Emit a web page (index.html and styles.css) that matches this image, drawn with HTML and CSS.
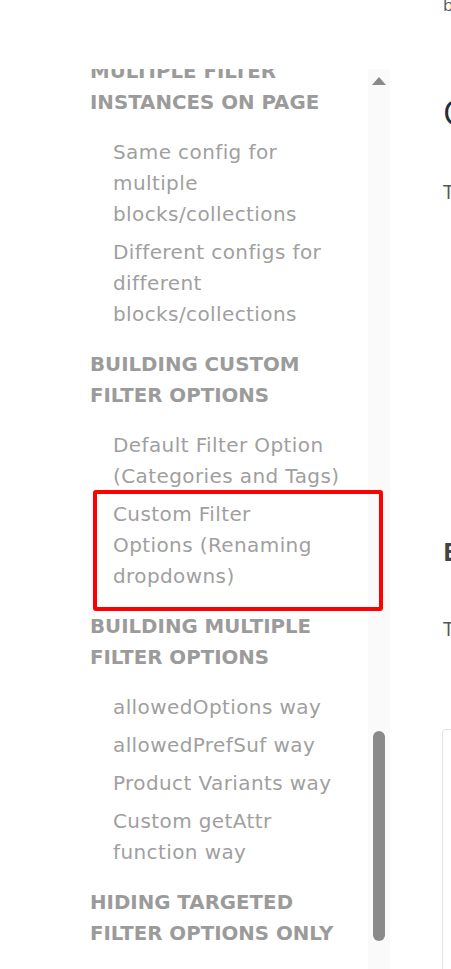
FILE: index.html
```html
<!DOCTYPE html>
<html lang="en">
<head>
  <meta charset="UTF-8" />
  <meta name="viewport" content="width=device-width, initial-scale=1.0"/>
  <title>Filter Docs</title>
  <link rel="stylesheet" href="styles.css">
</head>
<body>
  <div class="page">
    <aside class="sidebar">
      <nav class="toc">
        <div class="toc-section">
          <div class="toc-title">Multiple Filter<br>Instances on Page</div>
          <ul class="toc-sub">
            <li>Same config for<br>multiple<br>blocks/collections</li>
            <li>Different configs for<br>different<br>blocks/collections</li>
          </ul>
        </div>
        <div class="toc-section">
          <div class="toc-title">Building Custom<br>Filter Options</div>
          <ul class="toc-sub">
            <li>Default Filter Option<br>(Categories and Tags)</li>
            <li class="marked">Custom Filter<br>Options (Renaming<br>dropdowns)</li>
          </ul>
        </div>
        <div class="toc-section">
          <div class="toc-title">Building Multiple<br>Filter Options</div>
          <ul class="toc-sub">
            <li>allowedOptions way</li>
            <li>allowedPrefSuf way</li>
            <li>Product Variants way</li>
            <li>Custom getAttr<br>function way</li>
          </ul>
        </div>
        <div class="toc-section">
          <div class="toc-title">Hiding Targeted<br>Filter Options Only</div>
        </div>
      </nav>
      <div class="scrollbar">
        <span class="scroll-up"></span>
        <span class="scroll-thumb"></span>
      </div>
    </aside>

    <main class="content">
      <p class="cut">by default.</p>
      <h2>Custom Filter Options</h2>
      <p class="lead">The dropdown labels can be renamed through the config.</p>
      <h3>Building Multiple Filter Options</h3>
      <p class="lead">There are several ways to build more than one filter.</p>
      <div class="code-box"></div>
    </main>
  </div>
</body>
</html>
```

FILE: styles.css
```css
html, body {
  margin: 0;
  padding: 0;
  background: #fff;
}

.page {
  display: flex;
  width: 451px;
  height: 969px;
  overflow: hidden;
}

/* sidebar / table of contents */
.sidebar {
  flex: 0 0 390px;
  display: flex;
  margin-top: 69px;
  height: 900px;
  overflow: hidden;
}

.toc {
  flex: 0 0 368px;
  box-sizing: border-box;
  padding-left: 90px;
  font-family: "DejaVu Sans", sans-serif;
}

.toc-section:first-child {
  margin-top: -13.5px;
}

.toc-section + .toc-section {
  padding-top: 12px;
}

.toc-title {
  font-size: 19.8px;
  font-weight: bold;
  line-height: 31px;
  color: #9b9b9b;
  text-transform: uppercase;
  white-space: nowrap;
  margin-bottom: 19px;
}

.toc-sub {
  list-style: none;
  margin: 0;
  padding: 0 0 7px 23px;
}

.toc-sub li {
  font-size: 20px;
  line-height: 31px;
  letter-spacing: 0.4px;
  color: #9f9f9f;
  white-space: nowrap;
}

.toc-sub li + li {
  margin-top: 7px;
}

.toc-sub li.marked {
  position: relative;
}

.toc-sub li.marked::after {
  content: "";
  position: absolute;
  left: -20px;
  top: -8.5px;
  width: 290px;
  height: 121px;
  box-sizing: border-box;
  border: 4px solid #ff0000;
  border-radius: 3px;
}

.scrollbar {
  flex: 0 0 22px;
  display: flex;
  flex-direction: column;
  align-items: center;
  background: #fafafa;
}

.scroll-up {
  margin-top: 8px;
  width: 0;
  height: 0;
  border-left: 7.5px solid transparent;
  border-right: 7.5px solid transparent;
  border-bottom: 8px solid #898989;
}

.scroll-thumb {
  margin-top: 646px;
  width: 12px;
  height: 210px;
  border-radius: 6px;
  background: #8a8a8a;
}

/* main article */
.content {
  flex: 0 0 700px;
  padding-left: 53px;
  font-family: "Open Sans", sans-serif;
  white-space: nowrap;
}

.content p {
  margin: 0;
}

.cut {
  margin-top: -7px !important;
  font-size: 17px;
  line-height: 24px;
  color: #555;
}

.content h2 {
  margin: 73px 0 0;
  font-size: 34px;
  font-weight: normal;
  line-height: 44px;
  color: #1f2d3d;
}

.lead {
  margin-top: 43px !important;
  font-size: 20px;
  line-height: 30px;
  color: #555;
}

.content h3 {
  margin: 327px 0 0;
  font-size: 25px;
  font-weight: bold;
  line-height: 34px;
  color: #444;
}

.content h3 + .lead {
  margin-top: 46px !important;
}

.code-box {
  margin-top: 85px;
  margin-left: -1px;
  height: 400px;
  border: 1px solid #e3e3e3;
  border-radius: 4px;
}
```
